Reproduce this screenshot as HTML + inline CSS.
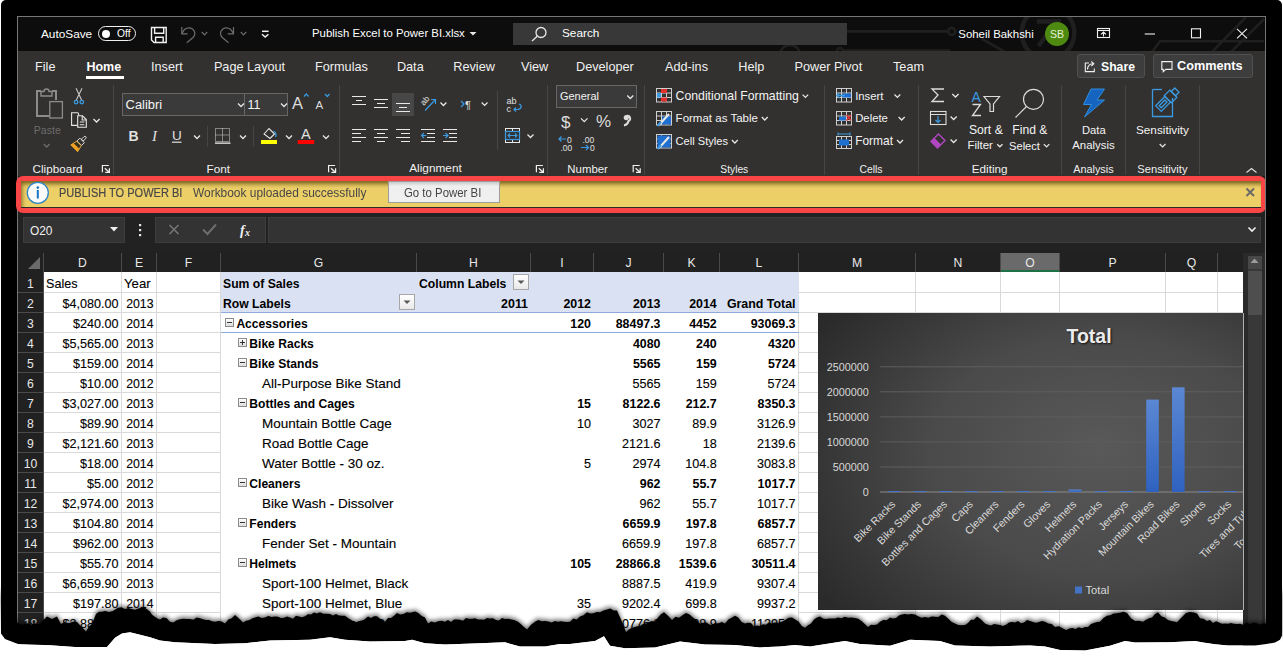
<!DOCTYPE html>
<html><head><meta charset="utf-8">
<style>
*{margin:0;padding:0;box-sizing:border-box}
html,body{width:1283px;height:656px;overflow:hidden;background:#fff;font-family:"Liberation Sans",sans-serif}
.a{position:absolute}
.t{position:absolute;white-space:nowrap;line-height:1}
svg{position:absolute;overflow:visible}
</style></head><body>

<div class="a" style="left:1px;top:0px;width:1281px;height:650px;background:#000;border-radius:5px 5px 0 0"></div>
<div class="a" style="left:17px;top:16px;width:1249px;height:630px;border:1px solid #767676;border-bottom:none;background:#222"></div>
<div class="a" style="left:18px;top:17px;width:1247px;height:34px;background:#0d0d0d"></div>
<div class="a" style="left:18px;top:51px;width:1247px;height:125px;background:#32312f"></div>
<div class="a" style="left:18px;top:176px;width:1247px;height:470px;background:#222"></div>
<svg style="left:0;top:0;overflow:hidden" width="1283" height="51">
<defs><clipPath id="tbc"><rect x="18" y="17" width="1247" height="34"/></clipPath></defs>
<g stroke="#1f1f1f" stroke-width="2.6" fill="none" clip-path="url(#tbc)">
<path d="M847,31.4 H948"/>
<circle cx="951.7" cy="31.4" r="3.5"/>
<circle cx="790" cy="55" r="10"/>
<circle cx="840" cy="51" r="3"/>
<path d="M843,50.5 H950"/>
<path d="M982,39 L1005,52"/>
<circle cx="1048" cy="33" r="26.3" stroke-width="4.5"/>
<path d="M1038.5,46 L1053,25.5 M1037,21.5 H1061" stroke-width="4.5"/>
<path d="M1152,52 L1160,41.3 H1264"/>
<path d="M1212,52 L1246,17"/>
<path d="M1231,52 L1264,19"/>
</g>
</svg>
<div class="t" style="left:41.0px;top:29.01px;font-size:11.8px;color:#fff;">AutoSave</div>
<div class="a" style="left:98px;top:26px;width:38px;height:15px;border:1.5px solid #f0f0f0;border-radius:8px"></div>
<div class="a" style="left:102px;top:29.5px;width:8px;height:8px;border-radius:50%;background:#fff"></div>
<div class="t" style="left:117.0px;top:28.88px;font-size:10.3px;color:#fff;">Off</div>
<svg style="left:0;top:0" width="1283" height="100"><g fill="none" stroke="#f2f2f2" stroke-width="1.4">
<path d="M151.5,27.5 H166.2 V42.5 H154 L151.5,40 Z"/><path d="M154.6,27.5 V33.2 H163.7 V27.5"/><path d="M155.6,42.5 V37.2 H163.2 V42.5"/>
<path d="M262,31.3 H268.6" stroke-width="1.5"/><path d="M262,34.2 L265.2,37 L268.4,34.2" stroke-width="1.5"/>
</g><g fill="none" stroke="#6c6c6c" stroke-width="1.2">
<path d="M181.8,27 V33.8 H187.6"/><path d="M182.2,33.4 C184,28 189,26.5 192.5,29 C195.5,31.5 195.5,35 193,37.5 L186.8,42.8"/>
<path d="M201.8,32 L204.5,34.8 L207.2,32"/>
<path d="M233.5,27 V33.8 H227.7"/><path d="M233.1,33.4 C231.3,28 226.3,26.5 222.8,29 C219.8,31.5 219.8,35 222.3,37.5 L228.5,42.8"/>
<path d="M240.8,32 L243.5,34.8 L246.2,32"/>
</g></svg>
<div class="t" style="left:312.0px;top:28.38px;font-size:11.37px;color:#fff;">Publish Excel to Power BI.xlsx</div>
<svg style="left:469px;top:31px" width="8" height="6"><polygon points="0.5,1 7.5,1 4,4.5" fill="#e8e8e8"/></svg>
<div class="a" style="left:513px;top:23px;width:334px;height:22px;background:#383838"></div>
<svg style="left:530px;top:26px" width="18" height="16"><g fill="none" stroke="#e8e8e8" stroke-width="1.3">
<circle cx="11" cy="6.5" r="5"/><path d="M7.5,10 L2,15"/></g></svg>
<div class="t" style="left:562.0px;top:28.01px;font-size:11.8px;color:#fff;">Search</div>
<div class="t" style="left:958.3px;top:28.94px;font-size:11.41px;color:#fff;">Soheil Bakhshi</div>
<div class="a" style="left:1045px;top:21.6px;width:24.4px;height:24.4px;border-radius:50%;background:#4f8a10"></div>
<div class="t" style="left:1057.0px;transform:translateX(-50%);top:29.11px;font-size:10.5px;color:#e8f0d8;">SB</div>
<svg style="left:0;top:0" width="1283" height="52"><g fill="none" stroke="#f0f0f0" stroke-width="1.1">
<rect x="1097.5" y="28.5" width="12" height="9"/><path d="M1097.5,30.5 H1109.5"/><path d="M1103.5,36.5 V32 M1101,34.3 L1103.5,32 L1106,34.3"/>
<path d="M1144.7,34 H1155"/>
<rect x="1191.5" y="28.8" width="9" height="9"/>
<path d="M1237,28.8 L1247,38.3 M1247,28.8 L1237,38.3"/>
</g></svg>
<div class="t" style="left:35.0px;top:60.55px;font-size:12.7px;color:#f0f0f0;">File</div>
<div class="t" style="left:151.0px;top:60.55px;font-size:12.7px;color:#f0f0f0;">Insert</div>
<div class="t" style="left:213.9px;top:60.55px;font-size:12.7px;color:#f0f0f0;">Page Layout</div>
<div class="t" style="left:315.0px;top:60.55px;font-size:12.7px;color:#f0f0f0;">Formulas</div>
<div class="t" style="left:396.9px;top:60.55px;font-size:12.7px;color:#f0f0f0;">Data</div>
<div class="t" style="left:453.3px;top:60.55px;font-size:12.7px;color:#f0f0f0;">Review</div>
<div class="t" style="left:521.0px;top:60.55px;font-size:12.7px;color:#f0f0f0;">View</div>
<div class="t" style="left:576.0px;top:60.55px;font-size:12.7px;color:#f0f0f0;">Developer</div>
<div class="t" style="left:665.0px;top:60.55px;font-size:12.7px;color:#f0f0f0;">Add-ins</div>
<div class="t" style="left:738.3px;top:60.55px;font-size:12.7px;color:#f0f0f0;">Help</div>
<div class="t" style="left:794.5px;top:60.55px;font-size:12.7px;color:#f0f0f0;">Power Pivot</div>
<div class="t" style="left:893.0px;top:60.55px;font-size:12.7px;color:#f0f0f0;">Team</div>
<div class="t" style="left:86.4px;top:60.72px;font-size:12.5px;color:#fff;font-weight:bold;">Home</div>
<div class="a" style="left:86px;top:76px;width:38px;height:3px;background:#fff"></div>
<div class="a" style="left:1077px;top:54px;width:68px;height:24px;border:1px solid #505050;border-radius:3px;background:#3d3d3d"></div>
<div class="a" style="left:1153px;top:54px;width:100px;height:24px;border:1px solid #505050;border-radius:3px;background:#3d3d3d"></div>
<div class="t" style="left:1101.0px;top:60.85px;font-size:12.23px;color:#fff;font-weight:bold;">Share</div>
<div class="t" style="left:1177.1px;top:60.47px;font-size:12.68px;color:#fff;font-weight:bold;">Comments</div>
<svg style="left:0;top:0" width="1283" height="200"><g fill="none" stroke="#f0f0f0" stroke-width="1.1">
<path d="M1089,63 H1085.3 V71.6 H1094.3 V68.5"/><path d="M1087.5,69.5 C1087.5,65.5 1090,63.8 1093.5,63.8 M1091.3,61.5 L1093.8,63.8 L1091.3,66.2"/>
<path d="M1161.8,61.6 H1172 V69.4 H1165.8 L1163.2,71.8 V69.4 H1161.8 Z"/>
</g></svg>
<div class="a" style="left:113px;top:85px;width:1px;height:90px;background:#454545"></div>
<div class="a" style="left:339px;top:85px;width:1px;height:90px;background:#454545"></div>
<div class="a" style="left:547px;top:85px;width:1px;height:90px;background:#454545"></div>
<div class="a" style="left:644px;top:85px;width:1px;height:90px;background:#454545"></div>
<div class="a" style="left:824px;top:85px;width:1px;height:90px;background:#454545"></div>
<div class="a" style="left:918px;top:85px;width:1px;height:90px;background:#454545"></div>
<div class="a" style="left:1061px;top:85px;width:1px;height:90px;background:#454545"></div>
<div class="a" style="left:1125px;top:85px;width:1px;height:90px;background:#454545"></div>
<div class="a" style="left:1199px;top:85px;width:1px;height:90px;background:#454545"></div>
<div class="a" style="left:207px;top:126px;width:1px;height:21px;background:#454545"></div>
<div class="a" style="left:253px;top:126px;width:1px;height:21px;background:#454545"></div>
<div class="a" style="left:497px;top:91px;width:1px;height:59px;background:#454545"></div>
<div class="t" style="left:32.6px;top:163.41px;font-size:11.68px;color:#f0f0f0;">Clipboard</div>
<div class="t" style="left:206.5px;top:163.36px;font-size:11.74px;color:#f0f0f0;">Font</div>
<div class="t" style="left:409.2px;top:163.29px;font-size:11.83px;color:#f0f0f0;">Alignment</div>
<div class="t" style="left:567.3px;top:163.64px;font-size:11.41px;color:#f0f0f0;">Number</div>
<div class="t" style="left:720.3px;top:164.60px;font-size:10.28px;color:#f0f0f0;">Styles</div>
<div class="t" style="left:859.5px;top:164.54px;font-size:10.35px;color:#f0f0f0;">Cells</div>
<div class="t" style="left:971.8px;top:163.41px;font-size:11.68px;color:#f0f0f0;">Editing</div>
<div class="t" style="left:1073.3px;top:164.14px;font-size:10.82px;color:#f0f0f0;">Analysis</div>
<div class="t" style="left:1137.3px;top:163.84px;font-size:11.17px;color:#f0f0f0;">Sensitivity</div>
<div class="t" style="left:33.8px;top:125.06px;font-size:10.56px;color:#6c6c6c;">Paste</div>
<div class="a" style="left:122px;top:93px;width:123px;height:23px;border:1px solid #666;background:#3a3a3a"></div>
<div class="a" style="left:244px;top:93px;width:44px;height:23px;border:1px solid #666;background:#3a3a3a"></div>
<div class="t" style="left:125.6px;top:98.70px;font-size:12.88px;color:#f4f4f4;">Calibri</div>
<div class="t" style="left:247.5px;top:99.02px;font-size:12.5px;color:#f4f4f4;">11</div>
<div class="a" style="left:556px;top:85px;width:81px;height:23px;border:1px solid #666;background:#3a3a3a"></div>
<div class="t" style="left:560.0px;top:91.22px;font-size:10.96px;color:#f4f4f4;">General</div>
<div class="t" style="left:675.6px;top:89.82px;font-size:12.26px;color:#f4f4f4;">Conditional Formatting</div>
<div class="t" style="left:675.6px;top:112.85px;font-size:11.52px;color:#f4f4f4;">Format as Table</div>
<div class="t" style="left:675.6px;top:136.41px;font-size:11.09px;color:#f4f4f4;">Cell Styles</div>
<div class="t" style="left:855.2px;top:90.62px;font-size:11.32px;color:#f4f4f4;">Insert</div>
<div class="t" style="left:855.2px;top:113.03px;font-size:11.31px;color:#f4f4f4;">Delete</div>
<div class="t" style="left:855.2px;top:135.69px;font-size:11.94px;color:#f4f4f4;">Format</div>
<div class="t" style="left:968.9px;top:123.67px;font-size:12.2px;color:#f4f4f4;">Sort &amp;</div>
<div class="t" style="left:967.4px;top:140.29px;font-size:11.47px;color:#f4f4f4;">Filter</div>
<div class="t" style="left:1012.3px;top:123.72px;font-size:12.14px;color:#f4f4f4;">Find &amp;</div>
<div class="t" style="left:1009.0px;top:140.56px;font-size:11.15px;color:#f4f4f4;">Select</div>
<div class="t" style="left:1082.0px;top:124.50px;font-size:11.22px;color:#f4f4f4;">Data</div>
<div class="t" style="left:1072.2px;top:140.34px;font-size:11.41px;color:#f4f4f4;">Analysis</div>
<div class="t" style="left:1136.0px;top:124.05px;font-size:11.75px;color:#f4f4f4;">Sensitivity</div>
<svg style="left:0;top:0" width="1283" height="200"><path d="M93.5,118.975 L96.55,122.025 L99.6,118.975" stroke="#e6e6e6" stroke-width="1.3" fill="none"/><path d="M238,103.5 L241.0,106.5 L244,103.5" stroke="#e6e6e6" stroke-width="1.3" fill="none"/><path d="M281,103.5 L284.0,106.5 L287,103.5" stroke="#e6e6e6" stroke-width="1.3" fill="none"/><path d="M194,135.5 L197.0,138.5 L200,135.5" stroke="#e6e6e6" stroke-width="1.3" fill="none"/><path d="M240,135.5 L243.0,138.5 L246,135.5" stroke="#e6e6e6" stroke-width="1.3" fill="none"/><path d="M286,135.5 L289.0,138.5 L292,135.5" stroke="#e6e6e6" stroke-width="1.3" fill="none"/><path d="M323,135.5 L326.0,138.5 L329,135.5" stroke="#e6e6e6" stroke-width="1.3" fill="none"/><path d="M440.5,102.525 L443.45,105.475 L446.4,102.525" stroke="#e6e6e6" stroke-width="1.3" fill="none"/><path d="M481.7,102.55 L484.6,105.45 L487.5,102.55" stroke="#e6e6e6" stroke-width="1.3" fill="none"/><path d="M527.5,134.5 L530.5,137.5 L533.5,134.5" stroke="#e6e6e6" stroke-width="1.3" fill="none"/><path d="M627.3,95.5 L630.3,98.5 L633.3,95.5" stroke="#e6e6e6" stroke-width="1.3" fill="none"/><path d="M581,118.375 L584.25,121.625 L587.5,118.375" stroke="#e6e6e6" stroke-width="1.3" fill="none"/><path d="M802.6,94.6 L805.4000000000001,97.4 L808.2,94.6" stroke="#e6e6e6" stroke-width="1.3" fill="none"/><path d="M761.8,117.02499999999998 L764.75,119.97500000000002 L767.7,117.02499999999998" stroke="#e6e6e6" stroke-width="1.3" fill="none"/><path d="M731.9,140.025 L734.8499999999999,142.975 L737.8,140.025" stroke="#e6e6e6" stroke-width="1.3" fill="none"/><path d="M894.5,94.55000000000001 L897.4,97.44999999999999 L900.3,94.55000000000001" stroke="#e6e6e6" stroke-width="1.3" fill="none"/><path d="M898.6,116.975 L901.6500000000001,120.025 L904.7,116.975" stroke="#e6e6e6" stroke-width="1.3" fill="none"/><path d="M897,140.0 L900.0,143.0 L903,140.0" stroke="#e6e6e6" stroke-width="1.3" fill="none"/><path d="M952.3,93.92499999999998 L955.45,97.07500000000002 L958.6,93.92499999999998" stroke="#e6e6e6" stroke-width="1.3" fill="none"/><path d="M950.6,116.475 L953.6500000000001,119.525 L956.7,116.475" stroke="#e6e6e6" stroke-width="1.3" fill="none"/><path d="M950.6,139.475 L953.6500000000001,142.525 L956.7,139.475" stroke="#e6e6e6" stroke-width="1.3" fill="none"/><path d="M997.2,144.175 L999.85,146.825 L1002.5,144.175" stroke="#e6e6e6" stroke-width="1.3" fill="none"/><path d="M1043.8,144.125 L1046.55,146.875 L1049.3,144.125" stroke="#e6e6e6" stroke-width="1.3" fill="none"/><path d="M1159.7,143.95000000000002 L1162.6,146.85 L1165.5,143.95000000000002" stroke="#e6e6e6" stroke-width="1.3" fill="none"/><path d="M43.7,144.025 L46.650000000000006,146.975 L49.6,144.025" stroke="#6c6c6c" stroke-width="1.3" fill="none"/>
<g fill="none" stroke="#8c8c8c" stroke-width="2">
<path d="M41,91 H37 V116 H49"/><path d="M52,91 H56 V100"/>
</g>
<path d="M41,96 V91.5 H44 A2.5,2.5 0 0 1 49,91.5 H52 V96 Z" fill="none" stroke="#8c8c8c" stroke-width="1.4"/>
<rect x="49.8" y="101.6" width="12.6" height="16.4" fill="none" stroke="#8c8c8c" stroke-width="1.3"/>
<g fill="none" stroke="#c8c8c8" stroke-width="1.1">
<path d="M76.1,88.3 L81.8,100.5 M82,88.3 L76.1,100.5"/></g>
<g fill="none" stroke="#3b9ae1" stroke-width="1.3"><circle cx="76.1" cy="102.1" r="1.8"/><circle cx="81.8" cy="102.1" r="1.8"/></g>
<g fill="none" stroke="#e8e8e8" stroke-width="1.1">
<path d="M77.2,125.4 H71.6 V112.8 H77.5 Q78.6,112.8 78.6,114 V115.5"/>
<path d="M77.7,115.8 H82.5 L86.3,119.6 V127.3 H77.7 Z"/><path d="M82.2,116 V120 H86"/><path d="M79.8,122 H84.3 M79.8,124.8 H84.3"/>
</g>
<g transform="translate(79,143.5) rotate(45) scale(0.8)">
<rect x="-1.6" y="-12" width="3.2" height="6.5" rx="1.6" fill="none" stroke="#e8e8e8" stroke-width="1.1"/>
<rect x="-4" y="-5.5" width="8" height="5" fill="none" stroke="#e8e8e8" stroke-width="1.1"/>
<path d="M-4,0 H4 L6,8.5 H-6 Z" fill="#3a3020" stroke="#f0b840" stroke-width="1.1"/>
<path d="M-5,4.5 H5 L6,8.5 H-6 Z" fill="#f0a020"/>
</g>
<g fill="none" stroke="#f0f0f0" stroke-width="1.2"><path d="M102.4,172.3 V165.5 H108.9 M104.80000000000001,168.3 L109.0,172 M109.4,168.3 V172.3 H105.2"/><path d="M328.6,172.3 V165.5 H335.1 M331.0,168.3 L335.20000000000005,172 M335.6,168.3 V172.3 H331.40000000000003"/><path d="M536.4,172.3 V165.5 H542.9 M538.8,168.3 L543.0,172 M543.4,168.3 V172.3 H539.1999999999999"/><path d="M633.2,172.3 V165.5 H639.7 M635.6,168.3 L639.8000000000001,172 M640.2,168.3 V172.3 H636.0"/></g>
</svg>
<svg style="left:0;top:0" width="1283" height="200">
<text x="292" y="109" font-family="Liberation Sans" font-size="16.5" fill="#dcdcdc">A</text>
<path d="M304,96.5 L306.3,94 L308.6,96.5" stroke="#3b9ae1" stroke-width="1.2" fill="none"/>
<text x="315.5" y="109" font-family="Liberation Sans" font-size="11.5" fill="#dcdcdc">A</text>
<path d="M325,94 L327.3,96.5 L329.6,94" stroke="#3b9ae1" stroke-width="1.2" fill="none"/>
<text x="128.5" y="140.5" font-family="Liberation Sans" font-weight="bold" font-size="14" fill="#e0e0e0">B</text>
<text x="152" y="140.5" font-family="Liberation Serif" font-style="italic" font-size="15" fill="#e0e0e0">I</text>
<text x="172" y="140" font-family="Liberation Sans" font-size="13.5" fill="#e0e0e0">U</text>
<rect x="172" y="141.6" width="9.5" height="1.2" fill="#e0e0e0"/>
<g stroke="#d8d8d8" stroke-width="1" stroke-dasharray="1,1" fill="none">
<rect x="215.5" y="128.5" width="14" height="13"/><path d="M222.5,128.5 V141.5 M215.5,135 H229.5"/>
</g>
<rect x="215" y="142.5" width="15.5" height="1.3" fill="#e8e8e8"/>
<path d="M264,134 L269,128.5 L274.5,134 L270,138.5 Z" fill="none" stroke="#e8e8e8" stroke-width="1.1"/>
<path d="M273.5,131 C276,132 276.5,135 275.5,137" stroke="#3b9ae1" stroke-width="1.3" fill="none"/>
<rect x="261" y="140" width="16" height="4" fill="#ffff00"/>
<text x="301" y="139" font-family="Liberation Sans" font-size="14.5" fill="#e0e0e0">A</text>
<rect x="297.7" y="140" width="16.5" height="4" fill="#ff0000"/>
<g stroke="#e8e8e8" stroke-width="1.1">
<path d="M352,96.5 H366 M356,100.5 H362 M352,104.5 H366"/>
<path d="M374,99.5 H388 M377,103.5 H385 M374,107.5 H388"/>
</g>
<rect x="392" y="93" width="22" height="23" fill="#474747"/>
<g stroke="#e8e8e8" stroke-width="1.1">
<path d="M396,103.5 H410 M399,107.5 H407 M396,111.5 H410"/>
<path d="M352,129.5 H366 M352,133.5 H361 M352,137.5 H366 M352,141.5 H361"/>
<path d="M374,129.5 H388 M377,133.5 H385 M374,137.5 H388 M377,141.5 H385"/>
<path d="M396,129.5 H410 M401,133.5 H410 M396,137.5 H410 M401,141.5 H410"/>
<path d="M421,129.5 H435 M427,133.5 H435 M427,137.5 H435 M421,141.5 H435"/>
<path d="M443,129.5 H457 M449,133.5 H457 M449,137.5 H457 M443,141.5 H457"/>
</g>
<path d="M421.5,135.5 H426.5 M424,133 L421.5,135.5 L424,138" stroke="#3b9ae1" stroke-width="1.2" fill="none"/>
<path d="M443,135.5 H448 M445.5,133 L448,135.5 L445.5,138" stroke="#3b9ae1" stroke-width="1.2" fill="none"/>
<text x="0" y="0" font-family="Liberation Sans" font-size="8.5" fill="#e0e0e0" transform="translate(424,106) rotate(-50)">ab</text>
<path d="M425,110.5 L435,100 M431,99.5 H435.5 V104" stroke="#3b9ae1" stroke-width="1.2" fill="none"/>
<path d="M461,101 L464,104 L461,107" stroke="#3b9ae1" stroke-width="1.3" fill="none"/>
<text x="465" y="108.5" font-family="Liberation Sans" font-size="11" fill="#e0e0e0">&#182;</text>
<text x="506.5" y="104" font-family="Liberation Sans" font-size="9" fill="#e0e0e0">ab</text>
<text x="506.5" y="111.5" font-family="Liberation Sans" font-size="9" fill="#e0e0e0">c</text>
<path d="M519,104 C522,105 522,109 518,109.5 H514 M516,107.5 L514,109.5 L516,111.5" stroke="#3b9ae1" stroke-width="1.2" fill="none"/>
<g fill="none" stroke="#e8e8e8" stroke-width="1"><rect x="505.5" y="128.5" width="14" height="14"/><path d="M512.5,128.5 V131 M512.5,140 V142.5"/></g>
<rect x="505.5" y="131.5" width="14" height="8" fill="none" stroke="#3b9ae1" stroke-width="1.2"/>
<path d="M508,135.5 H517 M510,133.5 L508,135.5 L510,137.5 M515,133.5 L517,135.5 L515,137.5" stroke="#3b9ae1" stroke-width="1.1" fill="none"/>
<text x="561" y="127.5" font-family="Liberation Sans" font-size="17" fill="#dcdcdc">$</text>
<text x="596" y="127" font-family="Liberation Sans" font-size="17" fill="#dcdcdc">%</text>
<path d="M626.5,116 A2.6,2.6 0 1 1 628.5,121 C628,123.5 626,125 624,125.5" fill="none" stroke="#dcdcdc" stroke-width="2"/>
<circle cx="626.3" cy="117.6" r="2.6" fill="#dcdcdc"/>
<text x="567" y="142.5" font-family="Liberation Sans" font-size="8.5" fill="#e0e0e0">0</text>
<text x="560.5" y="151" font-family="Liberation Sans" font-size="8.5" fill="#e0e0e0">.00</text>
<path d="M559,139 H566 M561.5,136.5 L559,139 L561.5,141.5" stroke="#3b9ae1" stroke-width="1.2" fill="none"/>
<text x="582.5" y="142.5" font-family="Liberation Sans" font-size="8.5" fill="#e0e0e0">.00</text>
<text x="590" y="151" font-family="Liberation Sans" font-size="8.5" fill="#e0e0e0">0</text>
<path d="M581,147.5 H588.5 M586,145 L588.5,147.5 L586,150" stroke="#3b9ae1" stroke-width="1.2" fill="none"/>
<g fill="none" stroke="#d0d0d0" stroke-width="1">
<rect x="656.5" y="88.5" width="15" height="13.5"/><path d="M656.5,93 H671.5 M656.5,97.5 H671.5 M661.5,88.5 V102 M666.5,88.5 V102"/>
<rect x="656.5" y="111.5" width="15" height="13.5"/><path d="M656.5,116 H671.5 M656.5,120.5 H671.5 M661.5,111.5 V125 M666.5,111.5 V125"/>
<rect x="656.5" y="134.5" width="15" height="13.5"/><path d="M656.5,139 H671.5 M656.5,143.5 H671.5 M661.5,134.5 V148"/>
</g>
<rect x="661" y="89" width="6" height="4" fill="#e03030"/><rect x="661" y="97.5" width="6" height="4" fill="#e03030"/><rect x="657" y="93" width="4" height="4.5" fill="#3b9ae1"/>
<rect x="662" y="116.5" width="9" height="8" fill="#1e6fd0"/>
<rect x="657.5" y="135.5" width="13" height="12" fill="#1e6fd0"/>
<path d="M659,125 L669,114 M659,148 L669,137" stroke="#e8e8e8" stroke-width="2"/>
<path d="M657.5,126 L661,122 M657.5,149 L661,145" stroke="#3b9ae1" stroke-width="2"/>
<g fill="none" stroke="#d0d0d0" stroke-width="1">
<rect x="836.5" y="88.5" width="15" height="13.5"/><path d="M836.5,93 H851.5 M836.5,97.5 H851.5 M841.5,88.5 V102 M846.5,88.5 V102"/>
<rect x="836.5" y="111.5" width="15" height="13.5"/><path d="M836.5,116 H851.5 M836.5,120.5 H851.5 M841.5,111.5 V125 M846.5,111.5 V125"/>
<rect x="836.5" y="136.5" width="15" height="12"/><path d="M836.5,140.5 H851.5 M836.5,144.5 H851.5 M841.5,136.5 V148.5 M846.5,136.5 V148.5"/>
</g>
<rect x="842" y="93.5" width="9" height="4" fill="#1e6fd0"/>
<path d="M837,95.5 H845 M839.5,93 L837,95.5 L839.5,98" stroke="#3b9ae1" stroke-width="1.3" fill="none"/>
<rect x="839" y="116.5" width="7" height="4" fill="#1e6fd0"/>
<path d="M846.5,115 L851,120.5 M851,115 L846.5,120.5" stroke="#e03030" stroke-width="1.4"/>
<rect x="839" y="139.5" width="10" height="6" fill="#1e6fd0"/>
<path d="M838,134 H850 M838,132.5 V135.5 M850,132.5 V135.5" stroke="#3b9ae1" stroke-width="1.1" fill="none"/>
<path d="M944,89 H932 L938,95 L932,101.5 H944" fill="none" stroke="#dcdcdc" stroke-width="1.3"/>
<rect x="930.5" y="111.5" width="15.5" height="13" fill="none" stroke="#dcdcdc" stroke-width="1.1"/>
<path d="M930.5,114.5 H946" stroke="#dcdcdc" stroke-width="1"/>
<path d="M938,116 V122.5 M935.5,120 L938,122.5 L940.5,120" stroke="#3b9ae1" stroke-width="1.2" fill="none"/>
<path d="M931,141.5 L938.5,134 L945,140.5 L937.5,148 Z" fill="none" stroke="#b146c2" stroke-width="1.4"/>
<path d="M931,141.5 L934.5,138 L941,144.5 L937.5,148 Z" fill="#b146c2"/>
<text x="971.5" y="101.8" font-family="Liberation Sans" font-size="14" fill="#3b9ae1">A</text>
<path d="M972.5,104.5 H980.5 L972.5,115.5 H981" fill="none" stroke="#dcdcdc" stroke-width="1.3"/>
<path d="M984,96.5 H999.5 L993.5,104 V111.5 H990 V104 Z" fill="none" stroke="#dcdcdc" stroke-width="1.2"/>
<circle cx="1033.5" cy="99.3" r="10" fill="none" stroke="#dcdcdc" stroke-width="1.2"/>
<path d="M1026.5,106.5 L1015.5,117.5" stroke="#dcdcdc" stroke-width="1.2"/>
<path d="M1091,89 H1104.5 L1097,100 H1104.5 L1084.5,117 L1091.5,104.5 H1083.5 Z" fill="#1565c0" stroke="#2f8fe0" stroke-width="1"/>
<path d="M1152.5,89.5 V116.5 H1172.5 V98" fill="none" stroke="#3b9ae1" stroke-width="1.3"/>
<path d="M1152.5,89.5 H1162" fill="none" stroke="#3b9ae1" stroke-width="1.3"/>
<g transform="translate(1167,100) rotate(-45)" fill="none" stroke="#3b9ae1" stroke-width="1.3">
<rect x="-12" y="-4" width="13" height="8"/><rect x="-9.5" y="-1.5" width="8" height="3"/>
<rect x="1" y="-5" width="8" height="10"/><rect x="9" y="-3" width="5" height="6"/>
</g>
<path d="M1246.5,172.5 L1251.5,168.5 L1256.5,172.5" stroke="#dcdcdc" stroke-width="1.2" fill="none"/>
</svg>
<div class="a" style="left:16px;top:176px;width:1250px;height:37px;border-radius:7px;background:#f94545"></div>
<div class="a" style="left:21px;top:181px;width:1240px;height:27px;background:#edcf68;box-shadow:inset 2px 4px 4px -1px rgba(70,52,0,0.7);border-bottom:1px solid #2a2a2a"></div>
<svg style="left:0;top:0" width="1283" height="260">
<circle cx="37.8" cy="192.8" r="10.5" fill="#fafafa" stroke="#2b84c6" stroke-width="1.3"/>
<circle cx="37.8" cy="187.6" r="1.3" fill="#1a76c4"/>
<rect x="36.8" y="190" width="2" height="8.5" fill="#1a76c4"/>
<path d="M1246.5,188.5 L1254,196 M1254,188.5 L1246.5,196" stroke="#6a6a6a" stroke-width="2"/>
</svg>
<div class="t" style="left:58.5px;top:187.33px;font-size:12.6px;color:#474747;-webkit-text-stroke:0.2px #474747;transform:scaleX(0.876);transform-origin:0 0;">PUBLISH TO POWER BI</div>
<div class="t" style="left:193.3px;top:187.33px;font-size:12.6px;color:#474747;transform:scaleX(0.947);transform-origin:0 0;">Workbook uploaded successfully</div>
<div class="a" style="left:388px;top:181px;width:112px;height:22px;border:1px solid #9c9c9c;background:linear-gradient(#c8c8c8,#efefef 4px,#f0f0f0)"></div>
<div class="t" style="left:404.3px;top:186.89px;font-size:12.3px;color:#454545;transform:scaleX(0.927);transform-origin:0 0;">Go to Power BI</div>
<div class="a" style="left:23px;top:217px;width:102px;height:26px;border:1px solid #3d3d3d;background:#333"></div>
<div class="t" style="left:30.0px;top:225.93px;font-size:11.9px;color:#f0f0f0;">O20</div>
<div class="a" style="left:155px;top:217px;width:111px;height:26px;border:1px solid #3d3d3d;background:#333"></div>
<div class="a" style="left:268px;top:217px;width:993px;height:26px;border:1px solid #3d3d3d;background:#333"></div>
<svg style="left:0;top:0" width="1283" height="260">
<polygon points="110,227 118,227 114,231.5" fill="#f0f0f0"/>
<rect x="139" y="224" width="2.2" height="2.2" fill="#e8e8e8"/><rect x="139" y="229" width="2.2" height="2.2" fill="#e8e8e8"/><rect x="139" y="234" width="2.2" height="2.2" fill="#e8e8e8"/>
<path d="M169.5,225 L178.5,234 M178.5,225 L169.5,234" stroke="#7a7a7a" stroke-width="1.4"/>
<path d="M203,229.5 L207.5,234 L216,224.5" stroke="#6e6e6e" stroke-width="2" fill="none"/>
<path d="M1248.5,227.5 L1252,231 L1255.5,227.5" stroke="#f0f0f0" stroke-width="1.6" fill="none"/>
</svg>
<svg style="left:0;top:0" width="300" height="260"><text x="240" y="235" font-family="Liberation Serif" font-style="italic" font-weight="bold" font-size="14" fill="#f0f0f0">f</text><text x="245" y="235.5" font-family="Liberation Serif" font-style="italic" font-weight="bold" font-size="10" fill="#f0f0f0">x</text></svg>
<div class="a" style="left:18px;top:253px;width:1226px;height:19px;background:#212121"></div>
<svg style="left:0;top:0" width="1283" height="656"><polygon points="40,257 40,269 28,269" fill="#6a6a6a"/></svg>
<div class="a" style="left:44px;top:272px;width:1199px;height:380px;background:#fff"></div>
<div class="a" style="left:18px;top:272px;width:25px;height:380px;background:#212121"></div>
<div class="a" style="left:43px;top:253px;width:1px;height:400px;background:#4a4a4a"></div>
<div class="a" style="left:121px;top:253px;width:1px;height:19px;background:#4a4a4a"></div>
<div class="a" style="left:156px;top:253px;width:1px;height:19px;background:#4a4a4a"></div>
<div class="a" style="left:220px;top:253px;width:1px;height:19px;background:#4a4a4a"></div>
<div class="a" style="left:416px;top:253px;width:1px;height:19px;background:#4a4a4a"></div>
<div class="a" style="left:530px;top:253px;width:1px;height:19px;background:#4a4a4a"></div>
<div class="a" style="left:593px;top:253px;width:1px;height:19px;background:#4a4a4a"></div>
<div class="a" style="left:663px;top:253px;width:1px;height:19px;background:#4a4a4a"></div>
<div class="a" style="left:719px;top:253px;width:1px;height:19px;background:#4a4a4a"></div>
<div class="a" style="left:798px;top:253px;width:1px;height:19px;background:#4a4a4a"></div>
<div class="a" style="left:915px;top:253px;width:1px;height:19px;background:#4a4a4a"></div>
<div class="a" style="left:1000px;top:253px;width:1px;height:19px;background:#4a4a4a"></div>
<div class="a" style="left:1059px;top:253px;width:1px;height:19px;background:#4a4a4a"></div>
<div class="a" style="left:1165px;top:253px;width:1px;height:19px;background:#4a4a4a"></div>
<div class="a" style="left:1217px;top:253px;width:1px;height:19px;background:#4a4a4a"></div>
<div class="a" style="left:1244px;top:253px;width:1px;height:19px;background:#4a4a4a"></div>
<div class="a" style="left:1001px;top:253px;width:58px;height:19px;background:#6a6a6a"></div>
<div class="a" style="left:1001px;top:270px;width:58px;height:2px;background:#1e7145"></div>
<div class="t" style="left:82.5px;transform:translateX(-50%);top:256.67px;font-size:12.2px;color:#e8e8e8;">D</div>
<div class="t" style="left:139.0px;transform:translateX(-50%);top:256.67px;font-size:12.2px;color:#e8e8e8;">E</div>
<div class="t" style="left:188.5px;transform:translateX(-50%);top:256.67px;font-size:12.2px;color:#e8e8e8;">F</div>
<div class="t" style="left:318.5px;transform:translateX(-50%);top:256.67px;font-size:12.2px;color:#e8e8e8;">G</div>
<div class="t" style="left:473.5px;transform:translateX(-50%);top:256.67px;font-size:12.2px;color:#e8e8e8;">H</div>
<div class="t" style="left:562.0px;transform:translateX(-50%);top:256.67px;font-size:12.2px;color:#e8e8e8;">I</div>
<div class="t" style="left:628.5px;transform:translateX(-50%);top:256.67px;font-size:12.2px;color:#e8e8e8;">J</div>
<div class="t" style="left:691.5px;transform:translateX(-50%);top:256.67px;font-size:12.2px;color:#e8e8e8;">K</div>
<div class="t" style="left:759.0px;transform:translateX(-50%);top:256.67px;font-size:12.2px;color:#e8e8e8;">L</div>
<div class="t" style="left:857.0px;transform:translateX(-50%);top:256.67px;font-size:12.2px;color:#e8e8e8;">M</div>
<div class="t" style="left:958.0px;transform:translateX(-50%);top:256.67px;font-size:12.2px;color:#e8e8e8;">N</div>
<div class="t" style="left:1030.0px;transform:translateX(-50%);top:256.67px;font-size:12.2px;color:#e8e8e8;">O</div>
<div class="t" style="left:1112.5px;transform:translateX(-50%);top:256.67px;font-size:12.2px;color:#e8e8e8;">P</div>
<div class="t" style="left:1191.5px;transform:translateX(-50%);top:256.67px;font-size:12.2px;color:#e8e8e8;">Q</div>
<div class="a" style="left:44px;top:292px;width:1199px;height:1px;background:#d9d9d9"></div>
<div class="a" style="left:18px;top:292px;width:25px;height:1px;background:#4a4a4a"></div>
<div class="t" style="left:30.5px;transform:translateX(-50%);top:277.67px;font-size:12.2px;color:#e8e8e8;">1</div>
<div class="a" style="left:44px;top:312px;width:1199px;height:1px;background:#d9d9d9"></div>
<div class="a" style="left:18px;top:312px;width:25px;height:1px;background:#4a4a4a"></div>
<div class="t" style="left:30.5px;transform:translateX(-50%);top:297.67px;font-size:12.2px;color:#e8e8e8;">2</div>
<div class="a" style="left:44px;top:332px;width:1199px;height:1px;background:#d9d9d9"></div>
<div class="a" style="left:18px;top:332px;width:25px;height:1px;background:#4a4a4a"></div>
<div class="t" style="left:30.5px;transform:translateX(-50%);top:317.67px;font-size:12.2px;color:#e8e8e8;">3</div>
<div class="a" style="left:44px;top:352px;width:1199px;height:1px;background:#d9d9d9"></div>
<div class="a" style="left:18px;top:352px;width:25px;height:1px;background:#4a4a4a"></div>
<div class="t" style="left:30.5px;transform:translateX(-50%);top:337.67px;font-size:12.2px;color:#e8e8e8;">4</div>
<div class="a" style="left:44px;top:372px;width:1199px;height:1px;background:#d9d9d9"></div>
<div class="a" style="left:18px;top:372px;width:25px;height:1px;background:#4a4a4a"></div>
<div class="t" style="left:30.5px;transform:translateX(-50%);top:357.67px;font-size:12.2px;color:#e8e8e8;">5</div>
<div class="a" style="left:44px;top:392px;width:1199px;height:1px;background:#d9d9d9"></div>
<div class="a" style="left:18px;top:392px;width:25px;height:1px;background:#4a4a4a"></div>
<div class="t" style="left:30.5px;transform:translateX(-50%);top:377.67px;font-size:12.2px;color:#e8e8e8;">6</div>
<div class="a" style="left:44px;top:412px;width:1199px;height:1px;background:#d9d9d9"></div>
<div class="a" style="left:18px;top:412px;width:25px;height:1px;background:#4a4a4a"></div>
<div class="t" style="left:30.5px;transform:translateX(-50%);top:397.67px;font-size:12.2px;color:#e8e8e8;">7</div>
<div class="a" style="left:44px;top:432px;width:1199px;height:1px;background:#d9d9d9"></div>
<div class="a" style="left:18px;top:432px;width:25px;height:1px;background:#4a4a4a"></div>
<div class="t" style="left:30.5px;transform:translateX(-50%);top:417.67px;font-size:12.2px;color:#e8e8e8;">8</div>
<div class="a" style="left:44px;top:452px;width:1199px;height:1px;background:#d9d9d9"></div>
<div class="a" style="left:18px;top:452px;width:25px;height:1px;background:#4a4a4a"></div>
<div class="t" style="left:30.5px;transform:translateX(-50%);top:437.67px;font-size:12.2px;color:#e8e8e8;">9</div>
<div class="a" style="left:44px;top:472px;width:1199px;height:1px;background:#d9d9d9"></div>
<div class="a" style="left:18px;top:472px;width:25px;height:1px;background:#4a4a4a"></div>
<div class="t" style="left:30.5px;transform:translateX(-50%);top:457.67px;font-size:12.2px;color:#e8e8e8;">10</div>
<div class="a" style="left:44px;top:492px;width:1199px;height:1px;background:#d9d9d9"></div>
<div class="a" style="left:18px;top:492px;width:25px;height:1px;background:#4a4a4a"></div>
<div class="t" style="left:30.5px;transform:translateX(-50%);top:477.67px;font-size:12.2px;color:#e8e8e8;">11</div>
<div class="a" style="left:44px;top:512px;width:1199px;height:1px;background:#d9d9d9"></div>
<div class="a" style="left:18px;top:512px;width:25px;height:1px;background:#4a4a4a"></div>
<div class="t" style="left:30.5px;transform:translateX(-50%);top:497.67px;font-size:12.2px;color:#e8e8e8;">12</div>
<div class="a" style="left:44px;top:532px;width:1199px;height:1px;background:#d9d9d9"></div>
<div class="a" style="left:18px;top:532px;width:25px;height:1px;background:#4a4a4a"></div>
<div class="t" style="left:30.5px;transform:translateX(-50%);top:517.67px;font-size:12.2px;color:#e8e8e8;">13</div>
<div class="a" style="left:44px;top:552px;width:1199px;height:1px;background:#d9d9d9"></div>
<div class="a" style="left:18px;top:552px;width:25px;height:1px;background:#4a4a4a"></div>
<div class="t" style="left:30.5px;transform:translateX(-50%);top:537.67px;font-size:12.2px;color:#e8e8e8;">14</div>
<div class="a" style="left:44px;top:572px;width:1199px;height:1px;background:#d9d9d9"></div>
<div class="a" style="left:18px;top:572px;width:25px;height:1px;background:#4a4a4a"></div>
<div class="t" style="left:30.5px;transform:translateX(-50%);top:557.67px;font-size:12.2px;color:#e8e8e8;">15</div>
<div class="a" style="left:44px;top:592px;width:1199px;height:1px;background:#d9d9d9"></div>
<div class="a" style="left:18px;top:592px;width:25px;height:1px;background:#4a4a4a"></div>
<div class="t" style="left:30.5px;transform:translateX(-50%);top:577.67px;font-size:12.2px;color:#e8e8e8;">16</div>
<div class="a" style="left:44px;top:612px;width:1199px;height:1px;background:#d9d9d9"></div>
<div class="a" style="left:18px;top:612px;width:25px;height:1px;background:#4a4a4a"></div>
<div class="t" style="left:30.5px;transform:translateX(-50%);top:597.67px;font-size:12.2px;color:#e8e8e8;">17</div>
<div class="a" style="left:44px;top:632px;width:1199px;height:1px;background:#d9d9d9"></div>
<div class="a" style="left:18px;top:632px;width:25px;height:1px;background:#4a4a4a"></div>
<div class="t" style="left:30.5px;transform:translateX(-50%);top:617.67px;font-size:12.2px;color:#e8e8e8;">18</div>
<div class="a" style="left:44px;top:652px;width:1199px;height:1px;background:#d9d9d9"></div>
<div class="a" style="left:18px;top:652px;width:25px;height:1px;background:#4a4a4a"></div>
<div class="a" style="left:121px;top:272px;width:1px;height:380px;background:#d9d9d9"></div>
<div class="a" style="left:156px;top:272px;width:1px;height:380px;background:#d9d9d9"></div>
<div class="a" style="left:220px;top:272px;width:1px;height:380px;background:#d9d9d9"></div>
<div class="a" style="left:416px;top:272px;width:1px;height:380px;background:#d9d9d9"></div>
<div class="a" style="left:530px;top:272px;width:1px;height:380px;background:#d9d9d9"></div>
<div class="a" style="left:593px;top:272px;width:1px;height:380px;background:#d9d9d9"></div>
<div class="a" style="left:663px;top:272px;width:1px;height:380px;background:#d9d9d9"></div>
<div class="a" style="left:719px;top:272px;width:1px;height:380px;background:#d9d9d9"></div>
<div class="a" style="left:798px;top:272px;width:1px;height:380px;background:#d9d9d9"></div>
<div class="a" style="left:915px;top:272px;width:1px;height:380px;background:#d9d9d9"></div>
<div class="a" style="left:1000px;top:272px;width:1px;height:380px;background:#d9d9d9"></div>
<div class="a" style="left:1059px;top:272px;width:1px;height:380px;background:#d9d9d9"></div>
<div class="a" style="left:1165px;top:272px;width:1px;height:380px;background:#d9d9d9"></div>
<div class="a" style="left:1217px;top:272px;width:1px;height:380px;background:#d9d9d9"></div>
<div class="a" style="left:221px;top:272px;width:577px;height:400px;background:#fff"></div>
<div class="a" style="left:221px;top:272px;width:578px;height:40px;background:#d9e1f2"></div>
<div class="a" style="left:221px;top:312px;width:578px;height:1px;background:#8ea9db"></div>
<div class="a" style="left:221px;top:332px;width:578px;height:1px;background:#8ea9db"></div>
<div class="t" style="left:46.0px;top:277.83px;font-size:12.6px;color:#000;-webkit-text-stroke:0.12px #000;">Sales</div>
<div class="t" style="left:124.0px;top:277.33px;font-size:13.2px;color:#000;-webkit-text-stroke:0.12px #000;">Year</div>
<div class="t" style="right:1164.5px;top:297.83px;font-size:12.6px;color:#000;-webkit-text-stroke:0.12px #000;">$4,080.00</div>
<div class="t" style="right:1129.5px;top:298.09px;font-size:12.3px;color:#000;-webkit-text-stroke:0.12px #000;">2013</div>
<div class="t" style="right:1164.5px;top:317.83px;font-size:12.6px;color:#000;-webkit-text-stroke:0.12px #000;">$240.00</div>
<div class="t" style="right:1129.5px;top:318.09px;font-size:12.3px;color:#000;-webkit-text-stroke:0.12px #000;">2014</div>
<div class="t" style="right:1164.5px;top:337.83px;font-size:12.6px;color:#000;-webkit-text-stroke:0.12px #000;">$5,565.00</div>
<div class="t" style="right:1129.5px;top:338.09px;font-size:12.3px;color:#000;-webkit-text-stroke:0.12px #000;">2013</div>
<div class="t" style="right:1164.5px;top:357.83px;font-size:12.6px;color:#000;-webkit-text-stroke:0.12px #000;">$159.00</div>
<div class="t" style="right:1129.5px;top:358.09px;font-size:12.3px;color:#000;-webkit-text-stroke:0.12px #000;">2014</div>
<div class="t" style="right:1164.5px;top:377.83px;font-size:12.6px;color:#000;-webkit-text-stroke:0.12px #000;">$10.00</div>
<div class="t" style="right:1129.5px;top:378.09px;font-size:12.3px;color:#000;-webkit-text-stroke:0.12px #000;">2012</div>
<div class="t" style="right:1164.5px;top:397.83px;font-size:12.6px;color:#000;-webkit-text-stroke:0.12px #000;">$3,027.00</div>
<div class="t" style="right:1129.5px;top:398.09px;font-size:12.3px;color:#000;-webkit-text-stroke:0.12px #000;">2013</div>
<div class="t" style="right:1164.5px;top:417.83px;font-size:12.6px;color:#000;-webkit-text-stroke:0.12px #000;">$89.90</div>
<div class="t" style="right:1129.5px;top:418.09px;font-size:12.3px;color:#000;-webkit-text-stroke:0.12px #000;">2014</div>
<div class="t" style="right:1164.5px;top:437.83px;font-size:12.6px;color:#000;-webkit-text-stroke:0.12px #000;">$2,121.60</div>
<div class="t" style="right:1129.5px;top:438.09px;font-size:12.3px;color:#000;-webkit-text-stroke:0.12px #000;">2013</div>
<div class="t" style="right:1164.5px;top:457.83px;font-size:12.6px;color:#000;-webkit-text-stroke:0.12px #000;">$18.00</div>
<div class="t" style="right:1129.5px;top:458.09px;font-size:12.3px;color:#000;-webkit-text-stroke:0.12px #000;">2014</div>
<div class="t" style="right:1164.5px;top:477.83px;font-size:12.6px;color:#000;-webkit-text-stroke:0.12px #000;">$5.00</div>
<div class="t" style="right:1129.5px;top:478.09px;font-size:12.3px;color:#000;-webkit-text-stroke:0.12px #000;">2012</div>
<div class="t" style="right:1164.5px;top:497.83px;font-size:12.6px;color:#000;-webkit-text-stroke:0.12px #000;">$2,974.00</div>
<div class="t" style="right:1129.5px;top:498.09px;font-size:12.3px;color:#000;-webkit-text-stroke:0.12px #000;">2013</div>
<div class="t" style="right:1164.5px;top:517.83px;font-size:12.6px;color:#000;-webkit-text-stroke:0.12px #000;">$104.80</div>
<div class="t" style="right:1129.5px;top:518.09px;font-size:12.3px;color:#000;-webkit-text-stroke:0.12px #000;">2014</div>
<div class="t" style="right:1164.5px;top:537.83px;font-size:12.6px;color:#000;-webkit-text-stroke:0.12px #000;">$962.00</div>
<div class="t" style="right:1129.5px;top:538.09px;font-size:12.3px;color:#000;-webkit-text-stroke:0.12px #000;">2013</div>
<div class="t" style="right:1164.5px;top:557.83px;font-size:12.6px;color:#000;-webkit-text-stroke:0.12px #000;">$55.70</div>
<div class="t" style="right:1129.5px;top:558.09px;font-size:12.3px;color:#000;-webkit-text-stroke:0.12px #000;">2014</div>
<div class="t" style="right:1164.5px;top:577.83px;font-size:12.6px;color:#000;-webkit-text-stroke:0.12px #000;">$6,659.90</div>
<div class="t" style="right:1129.5px;top:578.09px;font-size:12.3px;color:#000;-webkit-text-stroke:0.12px #000;">2013</div>
<div class="t" style="right:1164.5px;top:597.83px;font-size:12.6px;color:#000;-webkit-text-stroke:0.12px #000;">$197.80</div>
<div class="t" style="right:1129.5px;top:598.09px;font-size:12.3px;color:#000;-webkit-text-stroke:0.12px #000;">2014</div>
<div class="t" style="right:1164.5px;top:617.83px;font-size:12.6px;color:#000;-webkit-text-stroke:0.12px #000;">$2,88?.00</div>
<div class="t" style="right:1129.5px;top:618.09px;font-size:12.3px;color:#000;-webkit-text-stroke:0.12px #000;">2013</div>
<div class="t" style="left:223.0px;top:277.67px;font-size:12.2px;color:#000;font-weight:bold;">Sum of Sales</div>
<div class="t" style="left:419.0px;top:277.67px;font-size:12.2px;color:#000;font-weight:bold;">Column Labels</div>
<div class="a" style="left:513px;top:274px;width:16px;height:16px;border:1px solid #a6a6a6;background:linear-gradient(#fff,#e9e9e9)"></div>
<svg style="left:513px;top:274px" width="16" height="16"><polygon points="4.5,6.5 11.5,6.5 8,10" fill="#595959"/></svg>
<div class="t" style="left:223.0px;top:297.67px;font-size:12.2px;color:#000;font-weight:bold;">Row Labels</div>
<div class="a" style="left:399px;top:294px;width:16px;height:16px;border:1px solid #a6a6a6;background:linear-gradient(#fff,#e9e9e9)"></div>
<svg style="left:399px;top:294px" width="16" height="16"><polygon points="4.5,6.5 11.5,6.5 8,10" fill="#595959"/></svg>
<div class="t" style="right:755.0px;top:297.50px;font-size:12.4px;color:#000;font-weight:bold;">2011</div>
<div class="t" style="right:692.0px;top:297.50px;font-size:12.4px;color:#000;font-weight:bold;">2012</div>
<div class="t" style="right:622.5px;top:297.50px;font-size:12.4px;color:#000;font-weight:bold;">2013</div>
<div class="t" style="right:566.3px;top:297.50px;font-size:12.4px;color:#000;font-weight:bold;">2014</div>
<div class="t" style="right:487.5px;top:297.50px;font-size:12.4px;color:#000;font-weight:bold;">Grand Total</div>
<div class="a" style="left:225px;top:318px;width:9px;height:9px;border:1px solid #8c8c8c;background:linear-gradient(#fff,#dcdcdc)"></div>
<div class="a" style="left:227px;top:322px;width:5px;height:1px;background:#333"></div>
<div class="t" style="left:236.4px;top:318.26px;font-size:12.1px;color:#000;font-weight:bold;">Accessories</div>
<div class="t" style="right:692.0px;top:318.00px;font-size:12.4px;color:#000;font-weight:bold;">120</div>
<div class="t" style="right:622.5px;top:318.00px;font-size:12.4px;color:#000;font-weight:bold;">88497.3</div>
<div class="t" style="right:566.3px;top:318.00px;font-size:12.4px;color:#000;font-weight:bold;">4452</div>
<div class="t" style="right:487.5px;top:318.00px;font-size:12.4px;color:#000;font-weight:bold;">93069.3</div>
<div class="a" style="left:238px;top:338px;width:9px;height:9px;border:1px solid #8c8c8c;background:linear-gradient(#fff,#dcdcdc)"></div>
<div class="a" style="left:240px;top:342px;width:5px;height:1px;background:#333"></div>
<div class="a" style="left:242px;top:340px;width:1px;height:5px;background:#333"></div>
<div class="t" style="left:249.3px;top:338.26px;font-size:12.1px;color:#000;font-weight:bold;">Bike Racks</div>
<div class="t" style="right:622.5px;top:338.00px;font-size:12.4px;color:#000;font-weight:bold;">4080</div>
<div class="t" style="right:566.3px;top:338.00px;font-size:12.4px;color:#000;font-weight:bold;">240</div>
<div class="t" style="right:487.5px;top:338.00px;font-size:12.4px;color:#000;font-weight:bold;">4320</div>
<div class="a" style="left:238px;top:358px;width:9px;height:9px;border:1px solid #8c8c8c;background:linear-gradient(#fff,#dcdcdc)"></div>
<div class="a" style="left:240px;top:362px;width:5px;height:1px;background:#333"></div>
<div class="t" style="left:249.3px;top:358.26px;font-size:12.1px;color:#000;font-weight:bold;">Bike Stands</div>
<div class="t" style="right:622.5px;top:358.00px;font-size:12.4px;color:#000;font-weight:bold;">5565</div>
<div class="t" style="right:566.3px;top:358.00px;font-size:12.4px;color:#000;font-weight:bold;">159</div>
<div class="t" style="right:487.5px;top:358.00px;font-size:12.4px;color:#000;font-weight:bold;">5724</div>
<div class="t" style="left:262.0px;top:377.07px;font-size:13.5px;color:#000;-webkit-text-stroke:0.12px #000;">All-Purpose Bike Stand</div>
<div class="t" style="right:622.5px;top:377.83px;font-size:12.6px;color:#000;-webkit-text-stroke:0.12px #000;">5565</div>
<div class="t" style="right:566.3px;top:377.83px;font-size:12.6px;color:#000;-webkit-text-stroke:0.12px #000;">159</div>
<div class="t" style="right:487.5px;top:377.83px;font-size:12.6px;color:#000;-webkit-text-stroke:0.12px #000;">5724</div>
<div class="a" style="left:238px;top:398px;width:9px;height:9px;border:1px solid #8c8c8c;background:linear-gradient(#fff,#dcdcdc)"></div>
<div class="a" style="left:240px;top:402px;width:5px;height:1px;background:#333"></div>
<div class="t" style="left:249.3px;top:398.26px;font-size:12.1px;color:#000;font-weight:bold;">Bottles and Cages</div>
<div class="t" style="right:692.0px;top:398.00px;font-size:12.4px;color:#000;font-weight:bold;">15</div>
<div class="t" style="right:622.5px;top:398.00px;font-size:12.4px;color:#000;font-weight:bold;">8122.6</div>
<div class="t" style="right:566.3px;top:398.00px;font-size:12.4px;color:#000;font-weight:bold;">212.7</div>
<div class="t" style="right:487.5px;top:398.00px;font-size:12.4px;color:#000;font-weight:bold;">8350.3</div>
<div class="t" style="left:262.0px;top:417.07px;font-size:13.5px;color:#000;-webkit-text-stroke:0.12px #000;">Mountain Bottle Cage</div>
<div class="t" style="right:692.0px;top:417.83px;font-size:12.6px;color:#000;-webkit-text-stroke:0.12px #000;">10</div>
<div class="t" style="right:622.5px;top:417.83px;font-size:12.6px;color:#000;-webkit-text-stroke:0.12px #000;">3027</div>
<div class="t" style="right:566.3px;top:417.83px;font-size:12.6px;color:#000;-webkit-text-stroke:0.12px #000;">89.9</div>
<div class="t" style="right:487.5px;top:417.83px;font-size:12.6px;color:#000;-webkit-text-stroke:0.12px #000;">3126.9</div>
<div class="t" style="left:262.0px;top:437.07px;font-size:13.5px;color:#000;-webkit-text-stroke:0.12px #000;">Road Bottle Cage</div>
<div class="t" style="right:622.5px;top:437.83px;font-size:12.6px;color:#000;-webkit-text-stroke:0.12px #000;">2121.6</div>
<div class="t" style="right:566.3px;top:437.83px;font-size:12.6px;color:#000;-webkit-text-stroke:0.12px #000;">18</div>
<div class="t" style="right:487.5px;top:437.83px;font-size:12.6px;color:#000;-webkit-text-stroke:0.12px #000;">2139.6</div>
<div class="t" style="left:262.0px;top:457.07px;font-size:13.5px;color:#000;-webkit-text-stroke:0.12px #000;">Water Bottle - 30 oz.</div>
<div class="t" style="right:692.0px;top:457.83px;font-size:12.6px;color:#000;-webkit-text-stroke:0.12px #000;">5</div>
<div class="t" style="right:622.5px;top:457.83px;font-size:12.6px;color:#000;-webkit-text-stroke:0.12px #000;">2974</div>
<div class="t" style="right:566.3px;top:457.83px;font-size:12.6px;color:#000;-webkit-text-stroke:0.12px #000;">104.8</div>
<div class="t" style="right:487.5px;top:457.83px;font-size:12.6px;color:#000;-webkit-text-stroke:0.12px #000;">3083.8</div>
<div class="a" style="left:238px;top:478px;width:9px;height:9px;border:1px solid #8c8c8c;background:linear-gradient(#fff,#dcdcdc)"></div>
<div class="a" style="left:240px;top:482px;width:5px;height:1px;background:#333"></div>
<div class="t" style="left:249.3px;top:478.26px;font-size:12.1px;color:#000;font-weight:bold;">Cleaners</div>
<div class="t" style="right:622.5px;top:478.00px;font-size:12.4px;color:#000;font-weight:bold;">962</div>
<div class="t" style="right:566.3px;top:478.00px;font-size:12.4px;color:#000;font-weight:bold;">55.7</div>
<div class="t" style="right:487.5px;top:478.00px;font-size:12.4px;color:#000;font-weight:bold;">1017.7</div>
<div class="t" style="left:262.0px;top:497.07px;font-size:13.5px;color:#000;-webkit-text-stroke:0.12px #000;">Bike Wash - Dissolver</div>
<div class="t" style="right:622.5px;top:497.83px;font-size:12.6px;color:#000;-webkit-text-stroke:0.12px #000;">962</div>
<div class="t" style="right:566.3px;top:497.83px;font-size:12.6px;color:#000;-webkit-text-stroke:0.12px #000;">55.7</div>
<div class="t" style="right:487.5px;top:497.83px;font-size:12.6px;color:#000;-webkit-text-stroke:0.12px #000;">1017.7</div>
<div class="a" style="left:238px;top:518px;width:9px;height:9px;border:1px solid #8c8c8c;background:linear-gradient(#fff,#dcdcdc)"></div>
<div class="a" style="left:240px;top:522px;width:5px;height:1px;background:#333"></div>
<div class="t" style="left:249.3px;top:518.26px;font-size:12.1px;color:#000;font-weight:bold;">Fenders</div>
<div class="t" style="right:622.5px;top:518.00px;font-size:12.4px;color:#000;font-weight:bold;">6659.9</div>
<div class="t" style="right:566.3px;top:518.00px;font-size:12.4px;color:#000;font-weight:bold;">197.8</div>
<div class="t" style="right:487.5px;top:518.00px;font-size:12.4px;color:#000;font-weight:bold;">6857.7</div>
<div class="t" style="left:262.0px;top:537.07px;font-size:13.5px;color:#000;-webkit-text-stroke:0.12px #000;">Fender Set - Mountain</div>
<div class="t" style="right:622.5px;top:537.83px;font-size:12.6px;color:#000;-webkit-text-stroke:0.12px #000;">6659.9</div>
<div class="t" style="right:566.3px;top:537.83px;font-size:12.6px;color:#000;-webkit-text-stroke:0.12px #000;">197.8</div>
<div class="t" style="right:487.5px;top:537.83px;font-size:12.6px;color:#000;-webkit-text-stroke:0.12px #000;">6857.7</div>
<div class="a" style="left:238px;top:558px;width:9px;height:9px;border:1px solid #8c8c8c;background:linear-gradient(#fff,#dcdcdc)"></div>
<div class="a" style="left:240px;top:562px;width:5px;height:1px;background:#333"></div>
<div class="t" style="left:249.3px;top:558.26px;font-size:12.1px;color:#000;font-weight:bold;">Helmets</div>
<div class="t" style="right:692.0px;top:558.00px;font-size:12.4px;color:#000;font-weight:bold;">105</div>
<div class="t" style="right:622.5px;top:558.00px;font-size:12.4px;color:#000;font-weight:bold;">28866.8</div>
<div class="t" style="right:566.3px;top:558.00px;font-size:12.4px;color:#000;font-weight:bold;">1539.6</div>
<div class="t" style="right:487.5px;top:558.00px;font-size:12.4px;color:#000;font-weight:bold;">30511.4</div>
<div class="t" style="left:262.0px;top:577.07px;font-size:13.5px;color:#000;-webkit-text-stroke:0.12px #000;">Sport-100 Helmet, Black</div>
<div class="t" style="right:622.5px;top:577.83px;font-size:12.6px;color:#000;-webkit-text-stroke:0.12px #000;">8887.5</div>
<div class="t" style="right:566.3px;top:577.83px;font-size:12.6px;color:#000;-webkit-text-stroke:0.12px #000;">419.9</div>
<div class="t" style="right:487.5px;top:577.83px;font-size:12.6px;color:#000;-webkit-text-stroke:0.12px #000;">9307.4</div>
<div class="t" style="left:262.0px;top:597.07px;font-size:13.5px;color:#000;-webkit-text-stroke:0.12px #000;">Sport-100 Helmet, Blue</div>
<div class="t" style="right:692.0px;top:597.83px;font-size:12.6px;color:#000;-webkit-text-stroke:0.12px #000;">35</div>
<div class="t" style="right:622.5px;top:597.83px;font-size:12.6px;color:#000;-webkit-text-stroke:0.12px #000;">9202.4</div>
<div class="t" style="right:566.3px;top:597.83px;font-size:12.6px;color:#000;-webkit-text-stroke:0.12px #000;">699.8</div>
<div class="t" style="right:487.5px;top:597.83px;font-size:12.6px;color:#000;-webkit-text-stroke:0.12px #000;">9937.2</div>
<div class="t" style="left:262.0px;top:617.07px;font-size:13.5px;color:#000;-webkit-text-stroke:0.12px #000;">Sport-100 Helmet, Red</div>
<div class="t" style="right:622.5px;top:617.83px;font-size:12.6px;color:#000;-webkit-text-stroke:0.12px #000;">10776.9</div>
<div class="t" style="right:566.3px;top:617.83px;font-size:12.6px;color:#000;-webkit-text-stroke:0.12px #000;">728.9</div>
<div class="t" style="right:487.5px;top:617.83px;font-size:12.6px;color:#000;-webkit-text-stroke:0.12px #000;">11295.8</div>
<svg style="left:818px;top:313px;overflow:hidden" width="426" height="297">
<defs>
<radialGradient id="cg" cx="0.66" cy="0.5" r="0.8" fx="0.66" fy="0.45">
<stop offset="0" stop-color="#595959"/><stop offset="0.5" stop-color="#4a4a4a"/><stop offset="1" stop-color="#2a2a2a"/>
</radialGradient>
<linearGradient id="bg" x1="0" y1="0" x2="0" y2="1"><stop offset="0" stop-color="#5b87d3"/><stop offset="1" stop-color="#2f62c0"/></linearGradient>
</defs>
<rect x="0" y="0" width="426" height="297" fill="url(#cg)"/>
<text x="50.700000000000045" y="183.0" text-anchor="end" font-family="Liberation Sans" font-size="10.8" fill="#d9d9d9">0</text><rect x="62" y="153.5" width="400" height="1" fill="#5e5e5e"/><text x="50.700000000000045" y="158.0" text-anchor="end" font-family="Liberation Sans" font-size="10.8" fill="#d9d9d9">500000</text><rect x="62" y="128.4" width="400" height="1" fill="#5e5e5e"/><text x="50.700000000000045" y="132.9" text-anchor="end" font-family="Liberation Sans" font-size="10.8" fill="#d9d9d9">1000000</text><rect x="62" y="103.4" width="400" height="1" fill="#5e5e5e"/><text x="50.700000000000045" y="107.9" text-anchor="end" font-family="Liberation Sans" font-size="10.8" fill="#d9d9d9">1500000</text><rect x="62" y="78.3" width="400" height="1" fill="#5e5e5e"/><text x="50.700000000000045" y="82.8" text-anchor="end" font-family="Liberation Sans" font-size="10.8" fill="#d9d9d9">2000000</text><rect x="62" y="53.3" width="400" height="1" fill="#5e5e5e"/><text x="50.700000000000045" y="57.8" text-anchor="end" font-family="Liberation Sans" font-size="10.8" fill="#d9d9d9">2500000</text><rect x="62" y="178.5" width="400" height="1" fill="#8a8a8a"/><rect x="69.7" y="178.0" width="12.6" height="1.0" fill="url(#bg)"/><text transform="translate(78.0,192) rotate(-45)" text-anchor="end" font-family="Liberation Sans" font-size="10.7" fill="#d9d9d9">Bike Racks</text><rect x="95.6" y="178.0" width="12.6" height="1.0" fill="url(#bg)"/><text transform="translate(103.9,192) rotate(-45)" text-anchor="end" font-family="Liberation Sans" font-size="10.7" fill="#d9d9d9">Bike Stands</text><rect x="121.4" y="178.0" width="12.6" height="1.0" fill="url(#bg)"/><text transform="translate(129.7,192) rotate(-45)" text-anchor="end" font-family="Liberation Sans" font-size="10.7" fill="#d9d9d9">Bottles and Cages</text><rect x="147.2" y="178.0" width="12.6" height="1.0" fill="url(#bg)"/><text transform="translate(155.5,192) rotate(-45)" text-anchor="end" font-family="Liberation Sans" font-size="10.7" fill="#d9d9d9">Caps</text><rect x="173.1" y="178.0" width="12.6" height="1.0" fill="url(#bg)"/><text transform="translate(181.4,192) rotate(-45)" text-anchor="end" font-family="Liberation Sans" font-size="10.7" fill="#d9d9d9">Cleaners</text><rect x="198.9" y="178.0" width="12.6" height="1.0" fill="url(#bg)"/><text transform="translate(207.2,192) rotate(-45)" text-anchor="end" font-family="Liberation Sans" font-size="10.7" fill="#d9d9d9">Fenders</text><rect x="224.8" y="178.0" width="12.6" height="1.0" fill="url(#bg)"/><text transform="translate(233.1,192) rotate(-45)" text-anchor="end" font-family="Liberation Sans" font-size="10.7" fill="#d9d9d9">Gloves</text><rect x="250.7" y="176.5" width="12.6" height="2.5" fill="url(#bg)"/><text transform="translate(259.0,192) rotate(-45)" text-anchor="end" font-family="Liberation Sans" font-size="10.7" fill="#d9d9d9">Helmets</text><rect x="276.5" y="178.0" width="12.6" height="1.0" fill="url(#bg)"/><text transform="translate(284.8,192) rotate(-45)" text-anchor="end" font-family="Liberation Sans" font-size="10.7" fill="#d9d9d9">Hydration Packs</text><rect x="302.4" y="178.0" width="12.6" height="1.0" fill="url(#bg)"/><text transform="translate(310.7,192) rotate(-45)" text-anchor="end" font-family="Liberation Sans" font-size="10.7" fill="#d9d9d9">Jerseys</text><rect x="328.2" y="86.6" width="12.6" height="92.4" fill="url(#bg)"/><text transform="translate(336.5,192) rotate(-45)" text-anchor="end" font-family="Liberation Sans" font-size="10.7" fill="#d9d9d9">Mountain Bikes</text><rect x="354.0" y="74.3" width="12.6" height="104.7" fill="url(#bg)"/><text transform="translate(362.3,192) rotate(-45)" text-anchor="end" font-family="Liberation Sans" font-size="10.7" fill="#d9d9d9">Road Bikes</text><rect x="379.9" y="178.0" width="12.6" height="1.0" fill="url(#bg)"/><text transform="translate(388.2,192) rotate(-45)" text-anchor="end" font-family="Liberation Sans" font-size="10.7" fill="#d9d9d9">Shorts</text><rect x="405.7" y="178.0" width="12.6" height="1.0" fill="url(#bg)"/><text transform="translate(414.0,192) rotate(-45)" text-anchor="end" font-family="Liberation Sans" font-size="10.7" fill="#d9d9d9">Socks</text><rect x="431.6" y="178.0" width="12.6" height="1.0" fill="url(#bg)"/><text transform="translate(439.9,192) rotate(-45)" text-anchor="end" font-family="Liberation Sans" font-size="10.7" fill="#d9d9d9">Tires and Tubes</text><rect x="457.4" y="178.0" width="12.6" height="1.0" fill="url(#bg)"/><text transform="translate(465.8,192) rotate(-45)" text-anchor="end" font-family="Liberation Sans" font-size="10.7" fill="#d9d9d9">Touring Bikes</text><text x="271" y="30" text-anchor="middle" font-family="Liberation Sans" font-weight="bold" font-size="19.5" fill="#ececec" style="text-shadow:1px 1px 2px #111">Total</text><rect x="257" y="273.5" width="7" height="7" fill="#4472c4"/><text x="267.5" y="281" font-family="Liberation Sans" font-size="11.2" fill="#d9d9d9">Total</text></svg>
<div class="a" style="left:1243px;top:253px;width:22px;height:400px;background:#2a2a2a"></div>
<div class="a" style="left:1248px;top:256px;width:13.5px;height:400px;background:#383838"></div>
<div class="a" style="left:1248px;top:256px;width:13.5px;height:13px;background:#474747"></div>
<div class="a" style="left:1248px;top:271px;width:13.5px;height:44px;background:#4e4e4e"></div>
<div class="a" style="left:1242.5px;top:313px;width:1px;height:297px;background:#b0b0b0"></div>
<svg style="left:0;top:0" width="1283" height="656"><polygon points="1250.5,263 1258.5,263 1254.5,258.5" fill="#9c9c9c"/></svg>
<div class="a" style="left:1265px;top:16px;width:1px;height:630px;background:#767676"></div>
<svg style="left:0;top:0" width="1283" height="656">
<defs><filter id="blr" x="-5%" y="-50%" width="110%" height="200%"><feGaussianBlur stdDeviation="2.2"/></filter></defs>
<polygon points="1.0,590.0 17.0,622.8 22.0,624.7 25.0,624.0 28.0,623.3 31.0,624.8 34.0,622.9 37.0,624.2 40.0,624.0 43.5,619.9 47.0,616.6 52.0,619.0 57.0,616.6 61.0,624.0 64.0,622.2 67.0,623.2 70.0,622.8 74.0,621.6 77.0,622.0 80.0,625.3 83.0,628.2 86.0,631.5 89.0,626.4 92.0,624.0 96.0,614.0 99.0,611.7 102.0,611.8 105.0,611.0 109.0,612.0 113.0,611.0 118.0,607.8 121.5,607.2 125.0,609.0 128.3,607.9 131.7,609.0 135.0,609.8 138.3,608.4 141.7,607.7 145.0,607.8 150.0,611.4 152.0,614.7 157.0,618.3 160.0,619.4 163.0,617.4 166.5,618.1 170.0,621.7 173.3,622.4 176.7,620.2 180.0,619.3 183.3,618.7 186.7,618.9 190.0,619.1 193.3,619.8 196.7,617.5 200.0,618.3 203.0,619.2 206.0,620.1 209.0,619.9 212.0,621.2 215.0,621.7 218.3,620.9 221.7,621.4 225.0,623.4 228.3,619.6 231.7,618.3 235.0,614.9 239.0,618.5 243.0,622.6 246.0,620.7 249.0,620.3 252.0,618.6 255.0,617.4 258.3,616.6 261.7,618.1 265.0,617.6 268.3,616.0 271.7,617.0 275.0,616.6 278.0,616.8 281.0,618.1 284.0,617.8 287.0,616.6 290.0,617.4 293.0,618.7 296.0,615.7 299.0,616.4 302.0,617.3 305.0,616.2 308.0,614.3 311.0,614.6 314.0,612.4 317.0,613.6 320.0,612.3 323.3,613.7 326.7,613.7 330.0,614.0 333.0,615.5 336.0,614.1 339.0,615.6 342.0,615.7 345.0,615.7 348.3,618.3 351.7,620.2 355.0,622.6 360.0,620.9 364.0,619.8 368.0,616.6 371.0,617.9 374.0,616.3 377.0,616.2 381.0,619.5 385.0,621.7 388.0,618.1 391.0,618.0 394.0,615.7 397.0,613.1 400.2,614.6 403.5,614.0 406.8,612.2 410.0,612.8 415.0,611.4 418.3,613.0 421.7,615.9 425.0,617.4 428.0,623.4 431.4,621.5 434.8,622.6 438.2,621.3 441.6,620.8 445.0,621.7 448.0,619.9 451.0,621.9 454.0,619.5 457.0,619.5 460.0,619.7 463.0,620.8 466.0,618.0 469.0,618.8 472.0,618.8 475.0,618.3 478.0,619.6 481.0,619.5 484.0,619.7 487.0,617.9 490.0,618.4 493.0,618.3 496.0,620.1 499.0,620.4 502.0,617.9 505.0,619.1 508.2,618.7 511.5,619.5 514.8,620.2 518.0,621.7 521.0,624.2 524.0,627.1 527.0,629.4 531.0,624.8 535.0,621.7 538.3,620.0 541.7,621.2 545.0,620.9 548.3,621.4 551.7,622.5 555.0,620.9 558.0,621.7 561.0,621.3 564.0,621.8 567.0,622.1 570.0,621.7 573.3,618.6 576.7,619.6 580.0,616.6 583.5,615.3 587.0,612.3 590.2,613.5 593.5,613.3 596.8,612.0 600.0,612.3 603.5,610.5 607.0,609.4 610.3,608.5 613.7,610.6 617.0,610.6 622.0,621.7 626.0,632.0 629.5,629.1 633.0,627.6 636.5,626.6 640.0,626.0 643.0,624.1 646.0,623.8 649.0,622.0 652.0,621.0 655.0,621.7 658.0,617.5 661.0,614.2 664.0,612.3 668.0,615.7 672.0,620.0 675.5,616.8 679.0,617.7 682.5,615.2 686.0,613.1 689.5,614.6 693.0,617.5 696.5,620.3 700.0,623.4 703.1,623.0 706.2,622.2 709.4,624.5 712.5,625.0 715.6,623.3 718.8,623.3 721.9,622.1 725.0,623.4 728.3,619.6 731.7,617.8 735.0,615.7 738.3,617.5 741.7,621.9 745.0,623.4 748.0,622.8 751.0,622.9 754.0,626.4 757.0,625.6 760.0,626.0 763.0,624.2 766.0,624.8 769.0,622.4 772.0,623.4 775.0,622.6 778.4,623.1 781.8,621.7 785.2,620.1 788.6,617.7 792.0,617.4 795.2,619.5 798.5,621.5 801.8,626.0 805.0,627.7 808.0,625.2 811.0,623.4 814.0,619.4 817.0,617.4 820.0,616.5 823.0,618.4 826.0,619.0 829.0,618.5 832.0,618.4 835.0,618.4 838.0,617.4 841.4,618.3 844.8,616.8 848.2,617.8 851.6,617.4 855.0,618.0 858.2,618.7 861.5,620.9 864.8,624.0 868.0,626.9 871.0,624.8 874.0,624.9 877.0,624.5 880.0,621.7 883.3,620.1 886.7,620.2 890.0,617.4 893.0,618.5 896.0,617.9 899.0,615.5 902.0,614.6 905.0,614.1 908.0,614.5 911.4,614.0 914.8,614.5 918.2,616.3 921.6,617.7 925.0,616.9 928.3,617.8 931.7,616.4 935.0,616.8 938.3,617.1 941.7,614.6 945.0,615.7 948.3,618.8 951.7,622.1 955.0,623.4 958.3,624.9 961.7,625.3 965.0,625.1 968.0,622.9 971.0,619.8 974.0,619.7 977.0,616.6 981.0,619.5 985.0,623.4 988.0,624.7 991.0,625.6 994.0,624.1 997.0,624.4 1000.0,625.1 1003.0,626.0 1006.0,624.8 1009.0,622.5 1012.0,621.9 1015.0,622.6 1018.0,621.1 1021.0,623.2 1024.0,622.6 1027.0,620.1 1030.0,620.9 1033.0,622.1 1036.0,622.8 1039.0,621.9 1042.0,621.1 1045.0,621.7 1048.3,623.6 1051.7,624.0 1055.0,626.9 1059.0,626.2 1063.0,628.6 1066.1,629.9 1069.3,628.6 1072.4,628.0 1075.6,629.0 1078.7,627.2 1081.9,628.3 1085.0,626.9 1088.0,626.9 1091.0,623.9 1094.0,623.0 1097.0,622.1 1100.0,621.7 1103.5,617.9 1107.0,615.7 1110.2,615.3 1113.5,613.5 1116.8,613.3 1120.0,612.8 1123.5,611.8 1127.0,613.1 1131.0,618.3 1135.0,620.9 1139.0,620.8 1143.0,621.7 1146.0,619.7 1149.0,618.2 1152.0,617.4 1155.0,613.9 1158.0,612.3 1161.3,616.2 1164.7,617.4 1168.0,620.0 1171.0,620.9 1174.0,621.6 1177.0,622.3 1182.0,617.1 1186.0,613.0 1190.0,611.9 1193.5,612.6 1197.0,613.6 1200.0,618.3 1203.5,618.7 1207.0,621.1 1210.0,619.9 1213.0,622.9 1216.0,621.3 1219.0,622.6 1222.0,623.8 1225.0,623.5 1228.0,623.7 1231.0,623.1 1234.0,623.7 1237.0,623.9 1240.0,623.8 1243.2,624.7 1246.5,622.5 1249.8,623.9 1253.0,622.8 1256.2,622.9 1259.5,624.4 1262.8,623.6 1266.0,623.5 1282.0,590.0 1282.0,635.6 1280.0,639.7 1275.0,642.6 1265.0,644.3 1255.0,645.5 1228.0,645.5 1215.0,644.3 1203.0,642.6 1195.0,640.9 1170.0,642.3 1135.0,642.6 1125.0,640.9 1110.0,645.7 1085.0,650.5 1060.0,650.0 1045.0,646.6 1030.0,645.4 990.0,646.6 955.0,645.4 940.0,640.9 910.0,639.7 890.0,645.7 860.0,644.0 845.0,640.9 810.0,646.6 795.0,644.9 780.0,646.6 760.0,647.4 735.0,644.9 705.0,644.4 680.0,641.4 655.0,647.4 625.0,648.3 610.0,645.7 604.0,636.3 595.0,640.9 570.0,644.0 560.0,644.0 545.0,646.6 520.0,646.6 505.0,642.3 480.0,643.2 445.0,644.4 425.0,643.2 412.0,639.7 405.0,640.9 370.0,641.4 345.0,639.7 330.0,637.2 310.0,639.7 270.0,640.6 245.0,643.2 215.0,644.0 175.0,642.3 160.0,640.6 150.0,637.2 145.0,636.0 130.0,632.2 122.0,633.4 115.0,637.8 107.0,647.1 75.0,647.1 50.0,645.3 18.0,644.0 5.0,639.0 1.0,633.4" fill="#000" opacity="0.55" filter="url(#blr)" transform="translate(0,-2)"/>
<polygon points="1.0,590.0 17.0,622.8 22.0,624.7 25.0,624.0 28.0,623.3 31.0,624.8 34.0,622.9 37.0,624.2 40.0,624.0 43.5,619.9 47.0,616.6 52.0,619.0 57.0,616.6 61.0,624.0 64.0,622.2 67.0,623.2 70.0,622.8 74.0,621.6 77.0,622.0 80.0,625.3 83.0,628.2 86.0,631.5 89.0,626.4 92.0,624.0 96.0,614.0 99.0,611.7 102.0,611.8 105.0,611.0 109.0,612.0 113.0,611.0 118.0,607.8 121.5,607.2 125.0,609.0 128.3,607.9 131.7,609.0 135.0,609.8 138.3,608.4 141.7,607.7 145.0,607.8 150.0,611.4 152.0,614.7 157.0,618.3 160.0,619.4 163.0,617.4 166.5,618.1 170.0,621.7 173.3,622.4 176.7,620.2 180.0,619.3 183.3,618.7 186.7,618.9 190.0,619.1 193.3,619.8 196.7,617.5 200.0,618.3 203.0,619.2 206.0,620.1 209.0,619.9 212.0,621.2 215.0,621.7 218.3,620.9 221.7,621.4 225.0,623.4 228.3,619.6 231.7,618.3 235.0,614.9 239.0,618.5 243.0,622.6 246.0,620.7 249.0,620.3 252.0,618.6 255.0,617.4 258.3,616.6 261.7,618.1 265.0,617.6 268.3,616.0 271.7,617.0 275.0,616.6 278.0,616.8 281.0,618.1 284.0,617.8 287.0,616.6 290.0,617.4 293.0,618.7 296.0,615.7 299.0,616.4 302.0,617.3 305.0,616.2 308.0,614.3 311.0,614.6 314.0,612.4 317.0,613.6 320.0,612.3 323.3,613.7 326.7,613.7 330.0,614.0 333.0,615.5 336.0,614.1 339.0,615.6 342.0,615.7 345.0,615.7 348.3,618.3 351.7,620.2 355.0,622.6 360.0,620.9 364.0,619.8 368.0,616.6 371.0,617.9 374.0,616.3 377.0,616.2 381.0,619.5 385.0,621.7 388.0,618.1 391.0,618.0 394.0,615.7 397.0,613.1 400.2,614.6 403.5,614.0 406.8,612.2 410.0,612.8 415.0,611.4 418.3,613.0 421.7,615.9 425.0,617.4 428.0,623.4 431.4,621.5 434.8,622.6 438.2,621.3 441.6,620.8 445.0,621.7 448.0,619.9 451.0,621.9 454.0,619.5 457.0,619.5 460.0,619.7 463.0,620.8 466.0,618.0 469.0,618.8 472.0,618.8 475.0,618.3 478.0,619.6 481.0,619.5 484.0,619.7 487.0,617.9 490.0,618.4 493.0,618.3 496.0,620.1 499.0,620.4 502.0,617.9 505.0,619.1 508.2,618.7 511.5,619.5 514.8,620.2 518.0,621.7 521.0,624.2 524.0,627.1 527.0,629.4 531.0,624.8 535.0,621.7 538.3,620.0 541.7,621.2 545.0,620.9 548.3,621.4 551.7,622.5 555.0,620.9 558.0,621.7 561.0,621.3 564.0,621.8 567.0,622.1 570.0,621.7 573.3,618.6 576.7,619.6 580.0,616.6 583.5,615.3 587.0,612.3 590.2,613.5 593.5,613.3 596.8,612.0 600.0,612.3 603.5,610.5 607.0,609.4 610.3,608.5 613.7,610.6 617.0,610.6 622.0,621.7 626.0,632.0 629.5,629.1 633.0,627.6 636.5,626.6 640.0,626.0 643.0,624.1 646.0,623.8 649.0,622.0 652.0,621.0 655.0,621.7 658.0,617.5 661.0,614.2 664.0,612.3 668.0,615.7 672.0,620.0 675.5,616.8 679.0,617.7 682.5,615.2 686.0,613.1 689.5,614.6 693.0,617.5 696.5,620.3 700.0,623.4 703.1,623.0 706.2,622.2 709.4,624.5 712.5,625.0 715.6,623.3 718.8,623.3 721.9,622.1 725.0,623.4 728.3,619.6 731.7,617.8 735.0,615.7 738.3,617.5 741.7,621.9 745.0,623.4 748.0,622.8 751.0,622.9 754.0,626.4 757.0,625.6 760.0,626.0 763.0,624.2 766.0,624.8 769.0,622.4 772.0,623.4 775.0,622.6 778.4,623.1 781.8,621.7 785.2,620.1 788.6,617.7 792.0,617.4 795.2,619.5 798.5,621.5 801.8,626.0 805.0,627.7 808.0,625.2 811.0,623.4 814.0,619.4 817.0,617.4 820.0,616.5 823.0,618.4 826.0,619.0 829.0,618.5 832.0,618.4 835.0,618.4 838.0,617.4 841.4,618.3 844.8,616.8 848.2,617.8 851.6,617.4 855.0,618.0 858.2,618.7 861.5,620.9 864.8,624.0 868.0,626.9 871.0,624.8 874.0,624.9 877.0,624.5 880.0,621.7 883.3,620.1 886.7,620.2 890.0,617.4 893.0,618.5 896.0,617.9 899.0,615.5 902.0,614.6 905.0,614.1 908.0,614.5 911.4,614.0 914.8,614.5 918.2,616.3 921.6,617.7 925.0,616.9 928.3,617.8 931.7,616.4 935.0,616.8 938.3,617.1 941.7,614.6 945.0,615.7 948.3,618.8 951.7,622.1 955.0,623.4 958.3,624.9 961.7,625.3 965.0,625.1 968.0,622.9 971.0,619.8 974.0,619.7 977.0,616.6 981.0,619.5 985.0,623.4 988.0,624.7 991.0,625.6 994.0,624.1 997.0,624.4 1000.0,625.1 1003.0,626.0 1006.0,624.8 1009.0,622.5 1012.0,621.9 1015.0,622.6 1018.0,621.1 1021.0,623.2 1024.0,622.6 1027.0,620.1 1030.0,620.9 1033.0,622.1 1036.0,622.8 1039.0,621.9 1042.0,621.1 1045.0,621.7 1048.3,623.6 1051.7,624.0 1055.0,626.9 1059.0,626.2 1063.0,628.6 1066.1,629.9 1069.3,628.6 1072.4,628.0 1075.6,629.0 1078.7,627.2 1081.9,628.3 1085.0,626.9 1088.0,626.9 1091.0,623.9 1094.0,623.0 1097.0,622.1 1100.0,621.7 1103.5,617.9 1107.0,615.7 1110.2,615.3 1113.5,613.5 1116.8,613.3 1120.0,612.8 1123.5,611.8 1127.0,613.1 1131.0,618.3 1135.0,620.9 1139.0,620.8 1143.0,621.7 1146.0,619.7 1149.0,618.2 1152.0,617.4 1155.0,613.9 1158.0,612.3 1161.3,616.2 1164.7,617.4 1168.0,620.0 1171.0,620.9 1174.0,621.6 1177.0,622.3 1182.0,617.1 1186.0,613.0 1190.0,611.9 1193.5,612.6 1197.0,613.6 1200.0,618.3 1203.5,618.7 1207.0,621.1 1210.0,619.9 1213.0,622.9 1216.0,621.3 1219.0,622.6 1222.0,623.8 1225.0,623.5 1228.0,623.7 1231.0,623.1 1234.0,623.7 1237.0,623.9 1240.0,623.8 1243.2,624.7 1246.5,622.5 1249.8,623.9 1253.0,622.8 1256.2,622.9 1259.5,624.4 1262.8,623.6 1266.0,623.5 1282.0,590.0 1282.0,635.6 1280.0,639.7 1275.0,642.6 1265.0,644.3 1255.0,645.5 1228.0,645.5 1215.0,644.3 1203.0,642.6 1195.0,640.9 1170.0,642.3 1135.0,642.6 1125.0,640.9 1110.0,645.7 1085.0,650.5 1060.0,650.0 1045.0,646.6 1030.0,645.4 990.0,646.6 955.0,645.4 940.0,640.9 910.0,639.7 890.0,645.7 860.0,644.0 845.0,640.9 810.0,646.6 795.0,644.9 780.0,646.6 760.0,647.4 735.0,644.9 705.0,644.4 680.0,641.4 655.0,647.4 625.0,648.3 610.0,645.7 604.0,636.3 595.0,640.9 570.0,644.0 560.0,644.0 545.0,646.6 520.0,646.6 505.0,642.3 480.0,643.2 445.0,644.4 425.0,643.2 412.0,639.7 405.0,640.9 370.0,641.4 345.0,639.7 330.0,637.2 310.0,639.7 270.0,640.6 245.0,643.2 215.0,644.0 175.0,642.3 160.0,640.6 150.0,637.2 145.0,636.0 130.0,632.2 122.0,633.4 115.0,637.8 107.0,647.1 75.0,647.1 50.0,645.3 18.0,644.0 5.0,639.0 1.0,633.4" fill="#000"/>
<polygon points="1.0,633.4 5.0,639.0 18.0,644.0 50.0,645.3 75.0,647.1 107.0,647.1 115.0,637.8 122.0,633.4 130.0,632.2 145.0,636.0 150.0,637.2 160.0,640.6 175.0,642.3 215.0,644.0 245.0,643.2 270.0,640.6 310.0,639.7 330.0,637.2 345.0,639.7 370.0,641.4 405.0,640.9 412.0,639.7 425.0,643.2 445.0,644.4 480.0,643.2 505.0,642.3 520.0,646.6 545.0,646.6 560.0,644.0 570.0,644.0 595.0,640.9 604.0,636.3 610.0,645.7 625.0,648.3 655.0,647.4 680.0,641.4 705.0,644.4 735.0,644.9 760.0,647.4 780.0,646.6 795.0,644.9 810.0,646.6 845.0,640.9 860.0,644.0 890.0,645.7 910.0,639.7 940.0,640.9 955.0,645.4 990.0,646.6 1030.0,645.4 1045.0,646.6 1060.0,650.0 1085.0,650.5 1110.0,645.7 1125.0,640.9 1135.0,642.6 1170.0,642.3 1195.0,640.9 1203.0,642.6 1215.0,644.3 1228.0,645.5 1255.0,645.5 1265.0,644.3 1275.0,642.6 1280.0,639.7 1282.0,635.6 1283,656 0,656 0,600" fill="#fff"/>
</svg>
</body></html>
